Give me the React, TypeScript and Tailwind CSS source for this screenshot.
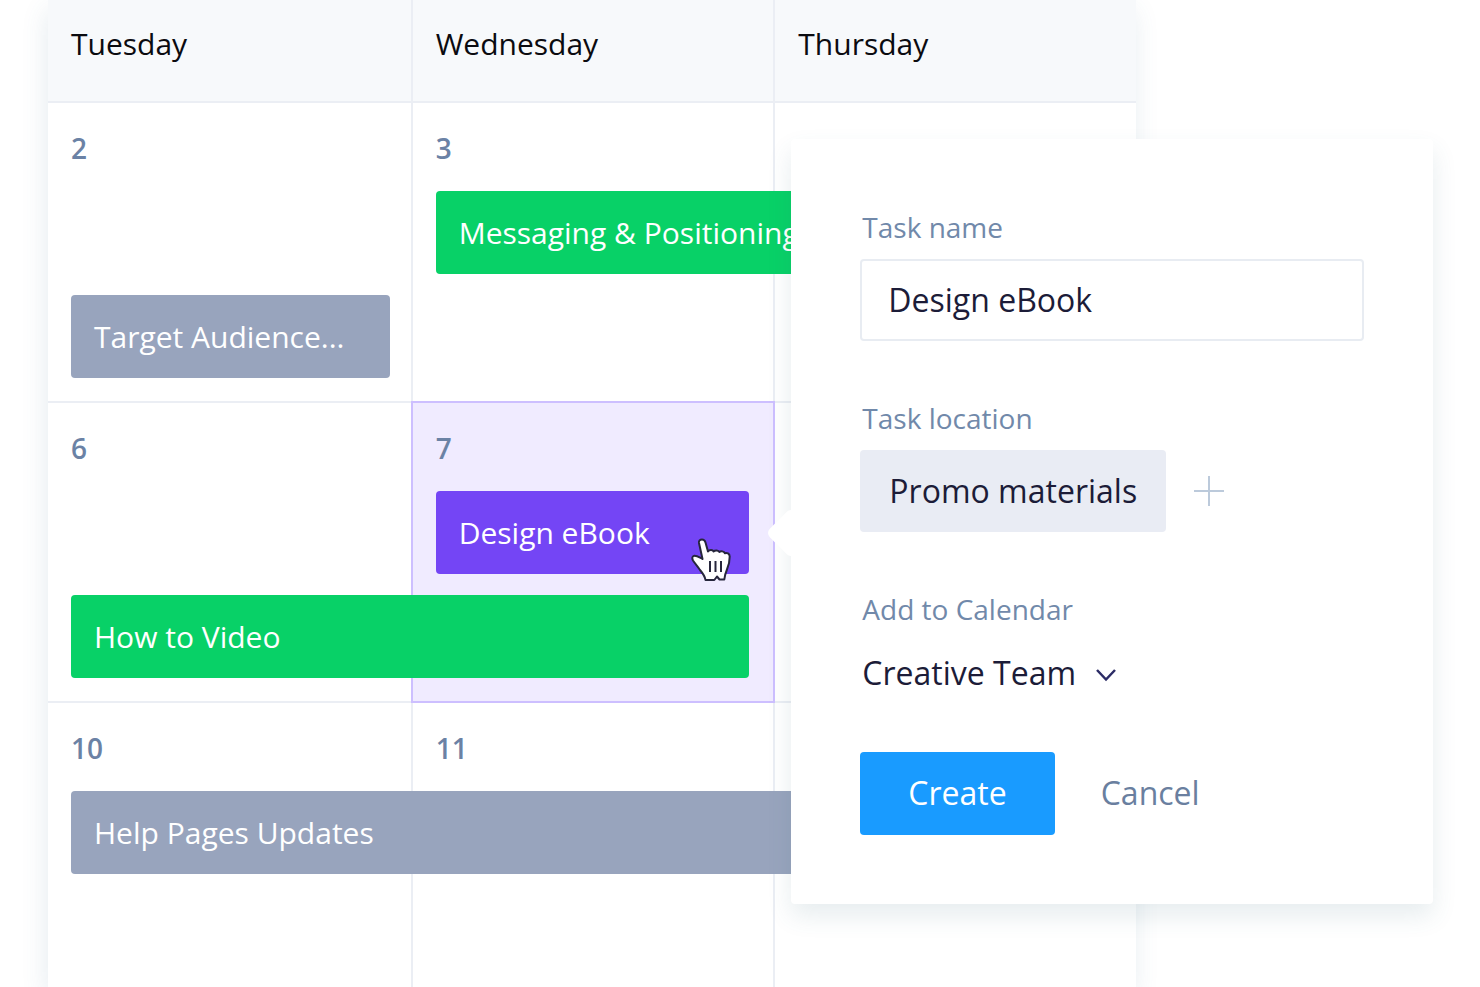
import { useState } from "react";

const days = ["Tuesday", "Wednesday", "Thursday"];

type CalendarEvent = {
  title: string;
  className: string;
  active?: boolean;
};

type Week = {
  dates: (number | null)[];
  className: string;
  events: CalendarEvent[];
};

const weeks: Week[] = [
  {
    dates: [2, 3, null],
    className: "grid-rows-[90px_104px_106px]",
    events: [
      {
        title: "Messaging & Positioning",
        className: "col-start-2 col-span-2 row-start-2 ml-[25px] mr-6 bg-[#08d167]",
      },
      {
        title: "Target Audience...",
        className: "col-start-1 row-start-3 ml-[23px] mr-[21px] bg-[#98a4bd]",
      },
    ],
  },
  {
    dates: [6, 7, null],
    className: "grid-rows-[90px_104px_106px]",
    events: [
      {
        title: "Design eBook",
        className: "col-start-2 row-start-2 ml-[25px] mr-6 bg-[#7445f5]",
        active: true,
      },
      {
        title: "How to Video",
        className: "col-start-1 col-span-2 row-start-3 ml-[23px] mr-6 bg-[#08d167]",
      },
    ],
  },
  {
    dates: [10, 11, null],
    className: "flex-1 grid-rows-[90px_104px_1fr]",
    events: [
      {
        title: "Help Pages Updates",
        className: "col-start-1 col-span-3 row-start-2 ml-[23px] mr-6 bg-[#98a4bd]",
      },
    ],
  },
];

const SELECTED_DATE = 7;

export default function App() {
  return (
    <main className="flex min-h-screen flex-col bg-white pr-[344px] pl-12 font-['Open_Sans',sans-serif]">
      <section className="relative flex flex-1 flex-col bg-white shadow-[-2px_10px_24px_rgba(60,110,140,0.12)]">
        <header className="grid h-[101px] grid-cols-3 bg-[#f7f9fb]">
          {days.map((day, i) => (
            <h2
              key={day}
              className={`pt-6 pl-[23px] text-[30px] leading-10 text-[#0b0b10] ${i > 0 ? "border-l-2 border-[#ebeef4]" : ""}`}
            >
              {day}
            </h2>
          ))}
        </header>

        {weeks.map((week, i) => (
          <WeekRow key={i} week={week} />
        ))}

        <TaskPopover />
      </section>
    </main>
  );
}

function WeekRow({ week }: { week: Week }) {
  return (
    <div className={`grid grid-cols-3 ${week.className}`}>
      {week.dates.map((date, i) => (
        <DayCell key={i} date={date} column={i} />
      ))}
      {week.events.map((event) => (
        <EventBar key={event.title} event={event} />
      ))}
    </div>
  );
}

const columnStarts = ["col-start-1", "col-start-2", "col-start-3"];

function DayCell({ date, column }: { date: number | null; column: number }) {
  const border =
    date === SELECTED_DATE
      ? "relative z-1 -mr-0.5 -mb-0.5 border-2 border-[#cdbfff] bg-[#f0ebff]"
      : column > 0
        ? "border-t-2 border-l-2 border-[#ebeef4]"
        : "border-t-2 border-[#ebeef4]";

  return (
    <div className={`row-span-3 row-start-1 pt-[25px] pl-[23px] ${columnStarts[column]} ${border}`}>
      {date !== null && (
        <time className="block text-[28px] leading-10 font-semibold text-[#6b82a5]">{date}</time>
      )}
    </div>
  );
}

function EventBar({ event }: { event: CalendarEvent }) {
  return (
    <button
      className={`relative z-2 flex h-[83px] items-center rounded-sm px-[23px] text-left text-[30px] leading-10 whitespace-nowrap text-white ${event.className}`}
    >
      {event.title}
      {event.active && <HandCursor />}
    </button>
  );
}

function HandCursor() {
  return (
    <svg
      className="absolute top-[47px] right-[18px]"
      width="40"
      height="44"
      viewBox="0 0 40 44"
      fill="none"
      aria-hidden="true"
    >
      <path
        d="M8 5C7.600 2.800 9 1.500 11 1.500C13 1.500 14 2.800 14.500 4.500L17 13.500C18.500 11.600 21.800 11.700 22.500 13.500C24 12 27.600 12.200 28.300 14C30 12.700 33 13.200 33.800 15.200C36 14.400 38.600 15.600 38.700 18.500C38.800 24 37.500 28 35.800 32C34.300 35.500 33.600 38.500 33.300 41.500H28.500L26 38.500L23.300 42H14.500C14 38 11.500 35 9 32C6.500 28.500 4 25.500 2 22.500C0.800 20.300 1.200 18.500 2.800 17.900C5.500 17.300 8.500 19.500 11.500 21Z"
        fill="#fff"
        stroke="#26263c"
        strokeWidth="2"
        strokeLinejoin="round"
      />
      <path d="M19 23V34M24.500 23V34M30 23V34" stroke="#26263c" strokeWidth="2" />
    </svg>
  );
}

function TaskPopover() {
  const [name, setName] = useState("Design eBook");

  return (
    <form
      className="absolute top-[139px] -right-[297px] left-2/3 z-10 ml-[18px] rounded bg-white px-[69px] pt-[68px] pb-[69px] shadow-[0_12px_24px_rgba(60,110,125,0.12)]"
      onSubmit={(e) => e.preventDefault()}
    >
      {/* arrow pointing at the selected event */}
      <span className="absolute top-[376px] -left-[18px] size-9 rotate-45 rounded-md bg-white" />

      <div className="relative flex flex-col">
        <label htmlFor="task-name" className="pl-0.5 text-[28px] leading-10 text-[#7189aa]">
          Task name
        </label>
        <input
          id="task-name"
          value={name}
          onChange={(e) => setName(e.target.value)}
          className="mt-3 h-[82px] w-full rounded-sm border-2 border-[#e8ecf2] px-[26px] pb-0.5 text-[32px] text-[#1c1c38] outline-none"
        />

        <span id="task-location" className="mt-[57px] pl-0.5 text-[28px] leading-10 text-[#7189aa]">
          Task location
        </span>
        <div className="mt-3 flex items-center gap-7">
          <button
            type="button"
            aria-describedby="task-location"
            className="h-[82px] rounded-sm bg-[#e9ecf4] px-[29px] text-[32px] text-[#1c1c38]"
          >
            Promo materials
          </button>
          <button type="button" aria-label="Add location">
            <svg width="30" height="30" viewBox="0 0 30 30" stroke="#bccadb" strokeWidth="2">
              <path d="M15 0V30M0 15H30" />
            </svg>
          </button>
        </div>

        <label htmlFor="calendar" className="mt-[57px] pl-0.5 text-[28px] leading-10 text-[#7189aa]">
          Add to Calendar
        </label>
        <div className="mt-3 flex h-16 items-center gap-5 pl-0.5">
          <select
            id="calendar"
            className="field-sizing-content appearance-none bg-transparent text-[32px] text-[#1c1c38] outline-none"
          >
            <option>Creative Team</option>
          </select>
          <svg
            className="pointer-events-none mt-1"
            width="20"
            height="14"
            viewBox="0 0 20 14"
            fill="none"
            stroke="#2c2c66"
            strokeWidth="2.500"
            aria-hidden="true"
          >
            <path d="M1 2L10 11.500L19 2" />
          </svg>
        </div>

        <div className="mt-[47px] flex items-center gap-[46px]">
          <button
            type="submit"
            className="h-[83px] rounded-sm bg-[#199bff] px-12 pb-0.5 text-[32px] text-white"
          >
            Create
          </button>
          <button type="button" className="pb-0.5 text-[32px] text-[#6a7f9f]">
            Cancel
          </button>
        </div>
      </div>
    </form>
  );
}
